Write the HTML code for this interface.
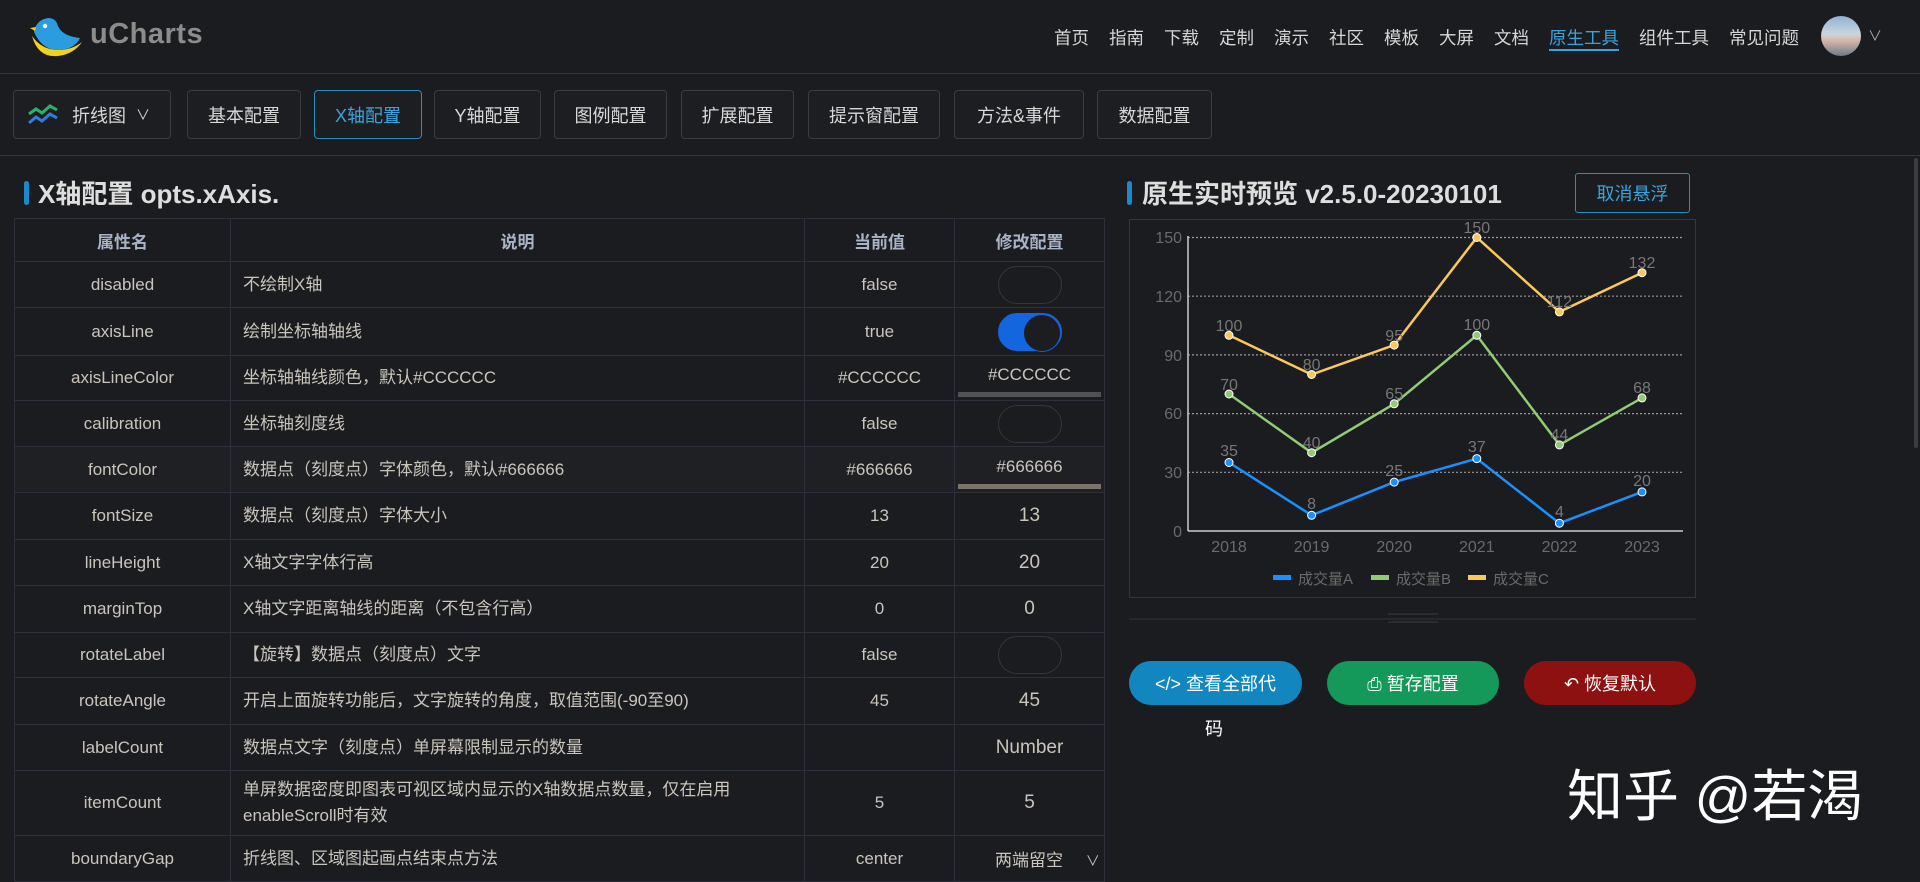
<!DOCTYPE html>
<html><head><meta charset="utf-8"><style>
*{box-sizing:border-box;margin:0;padding:0}
body{width:1920px;height:869px;overflow:hidden;background:#1b1c1f;font-family:"Liberation Sans","Noto Sans CJK SC",sans-serif;color:#cfcfcf;position:relative}
.hdr{position:absolute;left:0;top:0;width:1920px;height:74px;border-bottom:1px solid #333;}
.logo{position:absolute;left:28px;top:14px}
.logotxt{position:absolute;left:90px;top:18px;font-size:29px;font-weight:bold;color:#8c8c8c;letter-spacing:0.5px}
.nav{position:absolute;top:25px;left:1054px;font-size:17.5px;color:#d6d6d6;white-space:nowrap}
.nav span{margin-right:20px}
.nav .act{color:#3aa3dc;border-bottom:2px solid #3aa3dc;padding-bottom:1px}
.av{position:absolute;left:1821px;top:16px;width:40px;height:40px;border-radius:50%;background:linear-gradient(180deg,#8fb2d0 0%,#c9d6e0 45%,#d9b8a8 60%,#6b7a8a 100%)}
.car{position:absolute;left:1868px;top:26px;color:#aaa;font-size:14px}
.tab{position:absolute;top:90px;height:49px;border:1px solid #3a3c42;border-radius:4px;font-size:18px;color:#d8d8d8;display:flex;align-items:center;justify-content:center;background:#1d1e22}
.tab.a{border-color:#2a8cbf;color:#3aa3dc}
.line1{position:absolute;left:0;top:155px;width:1920px;height:1px;background:#34363c}
.ttl{position:absolute;top:174px;font-size:26px;font-weight:bold;color:#dedede;white-space:nowrap}
.bar{position:absolute;width:5px;height:24px;background:#1a8ac8;border-radius:3px}
table{position:absolute;left:14px;top:218px;width:1090px;border-collapse:collapse;table-layout:fixed;font-size:17px}
td,th{border:1px solid #2d303a;color:#c9c5bd;font-weight:normal;text-align:center}
th{color:#a8b4c6;font-weight:bold;height:43px;font-size:17px}
td.d{text-align:left;padding-left:12px;line-height:26px}
.tg{display:inline-block;width:64px;height:38px;border:1px solid #34363a;border-radius:19px;vertical-align:middle;position:relative}
.tg.on{background:#1366e0;border-color:#1366e0}
.tg.on:after{content:"";position:absolute;right:0;top:0;width:36px;height:36px;border-radius:50%;background:#1c1d20;border:1px solid #1366e0}
.ci{position:relative;height:44px;line-height:38px}
.ci i{position:absolute;left:3px;right:3px;bottom:3px;height:5px;background:#4e5155}
.btn{position:absolute;top:661px;height:44px;border-radius:22px;color:#fff;font-size:18px;display:flex;align-items:center;justify-content:center}
.chart{position:absolute;left:1129px;top:219px;width:567px;height:379px;border:1px solid #34363c}
</style></head><body>
<div class="hdr">
<svg class="logo" width="58" height="46" viewBox="0 0 58 46">
<path d="M4 22 Q10 44 30 42 Q46 40 54 28 Q44 36 30 36 Q14 36 4 22Z" fill="#f2d21a"/>
<path d="M6 18 Q8 6 20 4 Q28 4 30 12 Q34 22 52 24 Q46 36 30 36 Q14 36 6 18Z" fill="#2a9de0"/>
<circle cx="17" cy="12" r="2.2" fill="#fff"/><path d="M2 14 L8 13 L7 17Z" fill="#f2d21a"/>
</svg>
<div class="logotxt">uCharts</div>
<div class="nav"><span>首页</span><span>指南</span><span>下载</span><span>定制</span><span>演示</span><span>社区</span><span>模板</span><span>大屏</span><span>文档</span><span class="act">原生工具</span><span>组件工具</span><span>常见问题</span></div>
<div class="av"></div><div class="car">∨</div>
</div>
<div class="tab" style="left:13px;width:158px;justify-content:flex-start;padding-left:14px">
<svg width="30" height="22" viewBox="0 0 30 22"><path d="M1 10 L8 5 L14 9 L22 2 L29 6" stroke="#2bb36a" stroke-width="3" fill="none"/><path d="M1 19 L8 13 L14 17 L22 10 L29 14" stroke="#2a7fe0" stroke-width="3" fill="none"/></svg>
<span style="margin-left:14px">折线图</span><span style="margin-left:10px;font-size:14px">∨</span></div>
<div class="tab" style="left:187px;width:114px">基本配置</div>
<div class="tab a" style="left:314px;width:108px">X轴配置</div>
<div class="tab" style="left:434px;width:107px">Y轴配置</div>
<div class="tab" style="left:554px;width:113px">图例配置</div>
<div class="tab" style="left:681px;width:113px">扩展配置</div>
<div class="tab" style="left:808px;width:132px">提示窗配置</div>
<div class="tab" style="left:954px;width:130px">方法&amp;事件</div>
<div class="tab" style="left:1097px;width:115px">数据配置</div>
<div class="line1"></div>
<div style="position:absolute;right:2px;top:158px;width:4px;height:290px;background:#3a3c40;border-radius:2px"></div>
<div class="bar" style="left:24px;top:181px"></div>
<div class="ttl" style="left:38px">X轴配置 opts.xAxis.</div>
<table>
<colgroup><col style="width:216px"><col style="width:574px"><col style="width:150px"><col style="width:150px"></colgroup>
<tr><th>属性名</th><th>说明</th><th>当前值</th><th>修改配置</th></tr>
<tr style="height:46px"><td>disabled</td><td class="d">不绘制X轴</td><td>false</td><td><span class="tg"></span></td></tr>
<tr style="height:48px"><td>axisLine</td><td class="d">绘制坐标轴轴线</td><td>true</td><td><span class="tg on"></span></td></tr>
<tr style="height:45px"><td>axisLineColor</td><td class="d">坐标轴轴线颜色，默认#CCCCCC</td><td>#CCCCCC</td><td><div class="ci">#CCCCCC<i></i></div></td></tr>
<tr style="height:46px"><td>calibration</td><td class="d">坐标轴刻度线</td><td>false</td><td><span class="tg"></span></td></tr>
<tr style="height:46px;background:#1f2023"><td>fontColor</td><td class="d">数据点（刻度点）字体颜色，默认#666666</td><td>#666666</td><td><div class="ci">#666666<i style="background:#7a736a"></i></div></td></tr>
<tr style="height:47px"><td>fontSize</td><td class="d">数据点（刻度点）字体大小</td><td>13</td><td style="font-size:19px">13</td></tr>
<tr style="height:46px"><td>lineHeight</td><td class="d">X轴文字字体行高</td><td>20</td><td style="font-size:19px">20</td></tr>
<tr style="height:47px"><td>marginTop</td><td class="d">X轴文字距离轴线的距离（不包含行高）</td><td>0</td><td style="font-size:19px">0</td></tr>
<tr style="height:45px"><td>rotateLabel</td><td class="d">【旋转】数据点（刻度点）文字</td><td>false</td><td><span class="tg"></span></td></tr>
<tr style="height:47px"><td>rotateAngle</td><td class="d">开启上面旋转功能后，文字旋转的角度，取值范围(-90至90)</td><td>45</td><td style="font-size:19px">45</td></tr>
<tr style="height:46px"><td>labelCount</td><td class="d">数据点文字（刻度点）单屏幕限制显示的数量</td><td></td><td style="font-size:19px">Number</td></tr>
<tr style="height:65px"><td>itemCount</td><td class="d">单屏数据密度即图表可视区域内显示的X轴数据点数量，仅在启用enableScroll时有效</td><td>5</td><td style="font-size:19px">5</td></tr>
<tr style="height:46px"><td>boundaryGap</td><td class="d">折线图、区域图起画点结束点方法</td><td>center</td><td style="text-align:left;padding-left:40px">两端留空 <span style="margin-left:18px;font-size:14px">∨</span></td></tr>
</table>
<div class="bar" style="left:1127px;top:181px"></div>
<div class="ttl" style="left:1142px">原生实时预览 v2.5.0-20230101</div>
<div style="position:absolute;left:1575px;top:173px;width:115px;height:40px;border:1px solid #2a8cbf;border-radius:3px;color:#3aa3dc;font-size:18px;display:flex;align-items:center;justify-content:center">取消悬浮</div>
<div class="chart"></div>
<svg style="position:absolute;left:0;top:0" width="1920" height="869" font-family="Liberation Sans,Noto Sans CJK SC,sans-serif" font-size="16" fill="#6a6a6a">
<g stroke="#9a9a9a" stroke-dasharray="2 2" stroke-width="1.2">
<line x1="1188" x2="1683" y1="237.5" y2="237.5"/><line x1="1188" x2="1683" y1="296.2" y2="296.2"/><line x1="1188" x2="1683" y1="354.9" y2="354.9"/><line x1="1188" x2="1683" y1="413.6" y2="413.6"/><line x1="1188" x2="1683" y1="472.3" y2="472.3"/></g>
<line x1="1188" x2="1188" y1="236" y2="531" stroke="#ccc" stroke-width="1.5"/>
<line x1="1188" x2="1683" y1="531" y2="531" stroke="#ccc" stroke-width="1.5"/>
<g text-anchor="end"><text x="1182" y="243">150</text><text x="1182" y="302">120</text><text x="1182" y="361">90</text><text x="1182" y="419">60</text><text x="1182" y="478">30</text><text x="1182" y="537">0</text></g>
<g text-anchor="middle"><text x="1229" y="552">2018</text><text x="1311.6" y="552">2019</text><text x="1394.2" y="552">2020</text><text x="1476.8" y="552">2021</text><text x="1559.4" y="552">2022</text><text x="1642" y="552">2023</text></g>
<polyline points="1229,462.5 1311.6,515.3 1394.2,482.1 1476.8,458.6 1559.4,523.2 1642,491.9" stroke="#1890ff" stroke-width="2.5" fill="none"/>
<polyline points="1229,394 1311.6,452.7 1394.2,403.8 1476.8,335.3 1559.4,444.9 1642,397.9" stroke="#91cb74" stroke-width="2.5" fill="none"/>
<polyline points="1229,335.3 1311.6,374.5 1394.2,345.1 1476.8,237.5 1559.4,311.9 1642,272.7" stroke="#fac858" stroke-width="2.5" fill="none"/>
<g stroke="#fff" stroke-width="1"><g fill="#1890ff"><circle cx="1229" cy="462.5" r="4"/><circle cx="1311.6" cy="515.3" r="4"/><circle cx="1394.2" cy="482.1" r="4"/><circle cx="1476.8" cy="458.6" r="4"/><circle cx="1559.4" cy="523.2" r="4"/><circle cx="1642" cy="491.9" r="4"/></g>
<g fill="#91cb74"><circle cx="1229" cy="394" r="4"/><circle cx="1311.6" cy="452.7" r="4"/><circle cx="1394.2" cy="403.8" r="4"/><circle cx="1476.8" cy="335.3" r="4"/><circle cx="1559.4" cy="444.9" r="4"/><circle cx="1642" cy="397.9" r="4"/></g>
<g fill="#fac858"><circle cx="1229" cy="335.3" r="4"/><circle cx="1311.6" cy="374.5" r="4"/><circle cx="1394.2" cy="345.1" r="4"/><circle cx="1476.8" cy="237.5" r="4"/><circle cx="1559.4" cy="311.9" r="4"/><circle cx="1642" cy="272.7" r="4"/></g></g>
<g text-anchor="middle" fill="#777"><text x="1229" y="456">35</text><text x="1311.6" y="509">8</text><text x="1394.2" y="476">25</text><text x="1476.8" y="452">37</text><text x="1559.4" y="517">4</text><text x="1642" y="486">20</text>
<text x="1229" y="390">70</text><text x="1311.6" y="448">40</text><text x="1394.2" y="399">65</text><text x="1476.8" y="330">100</text><text x="1559.4" y="440">44</text><text x="1642" y="393">68</text>
<text x="1229" y="331">100</text><text x="1311.6" y="370">80</text><text x="1394.2" y="341">95</text><text x="1476.8" y="233">150</text><text x="1559.4" y="307">112</text><text x="1642" y="268">132</text></g>
<rect x="1273" y="575" width="18" height="5" fill="#1890ff"/><text x="1298" y="584" font-size="15">成交量A</text>
<rect x="1371" y="575" width="18" height="5" fill="#91cb74"/><text x="1396" y="584" font-size="15">成交量B</text>
<rect x="1468" y="575" width="18" height="5" fill="#fac858"/><text x="1493" y="584" font-size="15">成交量C</text>
<line x1="1129" x2="1696" y1="619" y2="619" stroke="#34363c"/>
<line x1="1388" x2="1438" y1="614" y2="614" stroke="#3a3c40"/><line x1="1388" x2="1438" y1="622" y2="622" stroke="#3a3c40"/>
</svg>
<div class="btn" style="left:1129px;width:173px;background:#1287bf">&lt;/&gt;&nbsp;查看全部代</div>
<div style="position:absolute;left:1205px;top:715px;color:#fff;font-size:18px">码</div>
<div class="btn" style="left:1327px;width:172px;background:#14995a">⎙&nbsp;暂存配置</div>
<div class="btn" style="left:1524px;width:172px;background:#8e1111">↶&nbsp;恢复默认</div>
<div style="position:absolute;left:1567px;top:752px;color:#fff;font-size:56px;white-space:nowrap">知乎 @若渴</div>
</body></html>
